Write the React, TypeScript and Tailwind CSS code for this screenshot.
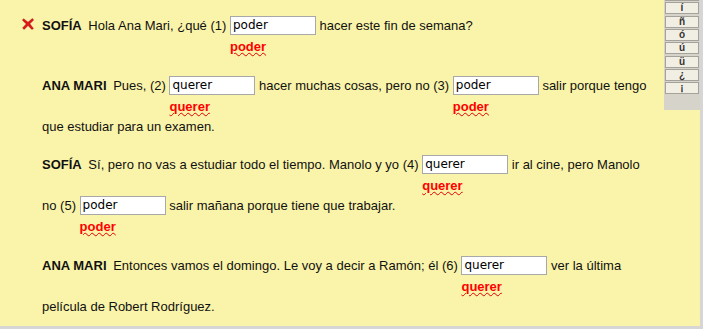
import React from 'react';

const chars = ['', 'í', 'ñ', 'ó', 'ú', 'ü', '¿', '¡'];

function Blank({ value }: { value: string }) {
  return (
    <span className="inline-block align-top h-[41px]">
      <input
        readOnly
        value={value}
        className="block w-[86px] h-[19px] border border-[#a8a8a8] bg-white px-[2px] text-[12px] text-black outline-none font-['DejaVu_Sans',sans-serif]"
      />
      <span className="block mt-[4px] leading-[16px] font-bold text-[#ff0000] underline decoration-wavy decoration-[#e30000] decoration-1">
        {value}
      </span>
    </span>
  );
}

function WrongMark() {
  return (
    <span className="inline-block align-top mt-[2px] ml-[-20px] mr-[8px] w-[12px] h-[12px]">
      <svg width="12" height="12" viewBox="0 0 12 12">
        <path
          d="M1.6 0.8 L6 4.2 L10.4 0.6 L11.6 2 L7.8 5.8 L11.4 10.4 L9.8 11.4 L6 7.4 L2.2 11.4 L0.6 10 L4.3 5.9 L0.4 2.2Z"
          fill="#e3141a"
          stroke="#9a1010"
          strokeWidth="0.5"
        />
      </svg>
    </span>
  );
}

function Row({ children }: { children: React.ReactNode }) {
  return <div className="leading-[19px] whitespace-nowrap">{children}</div>;
}

function Name({ children }: { children: React.ReactNode }) {
  return <b className="mr-[3px]">{children}</b>;
}

export default function App() {
  return (
    <div className="w-[708px] h-[335px] bg-white">
      <div className="relative w-[703px] h-[329px] border-r-[3px] border-b-[3px] border-[#d6d6d6] bg-[#faf4aa] text-[13px] text-[#111] font-['Liberation_Sans',Arial,sans-serif]">
        <div className="pt-[16px] pl-[42px] flex flex-col gap-[19px]">
          <div>
            <Row>
              <WrongMark />
              <Name>SOFÍA</Name> Hola Ana Mari, ¿qué (1) <Blank value="poder" /> hacer este fin de semana?
            </Row>
          </div>
          <div>
            <Row>
              <Name>ANA MARI</Name> Pues, (2) <Blank value="querer" /> hacer muchas cosas, pero no (3){' '}
              <Blank value="poder" /> salir porque tengo
            </Row>
            <Row>que estudiar para un examen.</Row>
          </div>
          <div>
            <Row>
              <Name>SOFÍA</Name> Sí, pero no vas a estudiar todo el tiempo. Manolo y yo (4){' '}
              <Blank value="querer" /> ir al cine, pero Manolo
            </Row>
            <Row>
              no (5) <Blank value="poder" /> salir mañana porque tiene que trabajar.
            </Row>
          </div>
          <div>
            <Row>
              <Name>ANA MARI</Name> Entonces vamos el domingo. Le voy a decir a Ramón; él (6){' '}
              <Blank value="querer" /> ver la última
            </Row>
            <Row>película de Robert Rodríguez.</Row>
          </div>
        </div>

        {/* floating accent palette */}
        <div className="absolute top-0 right-0 w-[36px] h-[110px] bg-[#d5d3ca] overflow-hidden px-[1px]">
          <div className="mt-[-11px] flex flex-col gap-[1.33px]">
            {chars.map((c, i) => (
              <div
                key={i}
                className="h-[12px] border border-[#a4a29a] bg-[#f1efe4] flex items-center justify-center text-[10px] font-bold text-[#333] leading-none"
              >
                {c}
              </div>
            ))}
          </div>
        </div>
      </div>
    </div>
  );
}
